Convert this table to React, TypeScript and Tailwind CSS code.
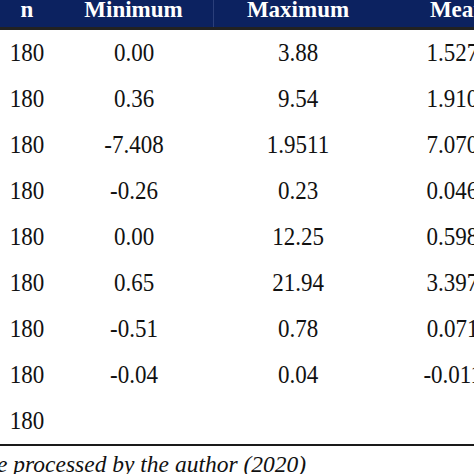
const rows: [string, string, string, string][] = [
  ["180", "0.00", "3.88", "1.5270"],
  ["180", "0.36", "9.54", "1.9100"],
  ["180", "-7.408", "1.9511", "7.0706"],
  ["180", "-0.26", "0.23", "0.0466"],
  ["180", "0.00", "12.25", "0.5988"],
  ["180", "0.65", "21.94", "3.3977"],
  ["180", "-0.51", "0.78", "0.0711"],
  ["180", "-0.04", "0.04", "-0.0111"],
  ["180", "", "", ""],
]

const cols = "grid grid-cols-[54px_160px_168px_152px]"

export default function App() {
  return (
    <div
      className="w-[474px] h-[474px] overflow-hidden bg-white text-[#111] text-[23px]"
      style={{ fontFamily: '"Liberation Serif", "Times New Roman", serif' }}
    >
      <div className="w-[534px]">
        <div className={`${cols} h-[30px] bg-[#0c2260] border-b-[3px] border-[#222] text-white font-bold leading-[19px]`}>
          <div className="text-center">n</div>
          <div className="text-center border-r border-[#2b3f7a]">Minimum</div>
          <div className="text-center">Maximum</div>
          <div className="text-center">Mean</div>
        </div>
        {rows.map((r, i) => (
          <div key={i} className={`${cols} h-[46px] items-center`}>
            {r.map((c, j) => (
              <div key={j} className="text-center">
                <span className="inline-block scale-y-[1.12]">{c}</span>
              </div>
            ))}
          </div>
        ))}
        <div className="border-t-2 border-[#1a1a1a]" />
        <div className="italic whitespace-nowrap -ml-[3px] mt-px text-[23.5px]">
          e processed by the author (2020)
        </div>
      </div>
    </div>
  )
}
